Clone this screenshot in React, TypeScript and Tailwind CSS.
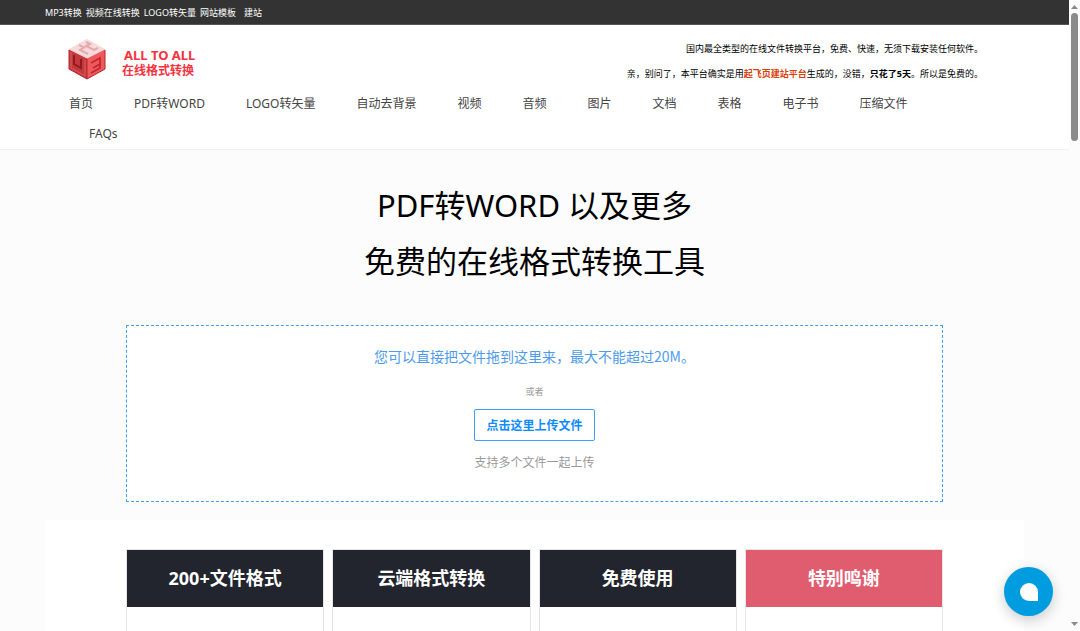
import { clsx } from 'clsx';

interface CardProps {
  title: string;
  highlight?: boolean;
}

const topLinks = ['MP3转换', '视频在线转换', 'LOGO转矢量', '网站模板'];

const navItems = [
  '首页',
  'PDF转WORD',
  'LOGO转矢量',
  '自动去背景',
  '视频',
  '音频',
  '图片',
  '文档',
  '表格',
  '电子书',
  '压缩文件',
  'FAQs',
];

const cards: CardProps[] = [
  { title: '200+文件格式' },
  { title: '云端格式转换' },
  { title: '免费使用' },
  { title: '特别鸣谢', highlight: true },
];

const CubeLogo = () => (
  <svg viewBox="0 0 38 42" className="h-[42px] w-[38px]" aria-hidden="true">
    <path d="M19 1 37 11 19 20 1 11Z" fill="#f8dada" />
    <path d="M1 11 19 20V41L1 31Z" fill="#c4383c" />
    <path d="M37 11 19 20V41L37 31Z" fill="#ee5a5c" />
    <path d="M11 7 16 9.500 12 12 20 16 M18 4 22 6 18 8 26 12 30 10" fill="none" stroke="#e5aaac" strokeWidth="2" />
    <path d="M6 17V26L13 30V21" fill="none" stroke="#8f1a1f" strokeWidth="2" />
    <path d="M3 14V30L17 38V22" fill="none" stroke="#dc5a5d" strokeWidth="1" />
    <path d="M23 25 32 20V30L23 35 M25 30 32 26" fill="none" stroke="#c4262e" strokeWidth="1.800" />
    <path d="M1 11 19 20 37 11" fill="none" stroke="#fbdcdc" strokeWidth="1" />
    <path d="M1 12V31L19 41 37 31V12 M19 21V41" fill="none" stroke="#b3262d" strokeWidth="1" />
  </svg>
);

const TopBar = () => (
  <div className="flex h-[25px] items-center gap-1 border-b border-[#555] bg-[#333] px-[45px] pt-0.5 text-[9px] text-white">
    {topLinks.map((link) => (
      <a key={link} href="#">
        {link}
      </a>
    ))}
    <a href="#" className="ml-1">
      建站
    </a>
  </div>
);

const Header = () => (
  <header className="border-b border-[#f2f2f2] bg-white pr-[84px] pl-[68px]">
    <div className="flex h-16 justify-between">
      <a href="#" className="flex items-center gap-4 pt-1 text-[12px] leading-4 font-bold text-[#f5333f]">
        <CubeLogo />
        <span className="flex flex-col pt-2">
          <span className="pl-0.5 text-[13px] leading-4">ALL TO ALL</span>
          <span>在线格式转换</span>
        </span>
      </a>
      <div className="pt-[11px] pr-0.5 text-right text-[9px] leading-[25px] text-black">
        <p>国内最全类型的在线文件转换平台，免费、快速，无须下载安装任何软件。</p>
        <p>
          亲，别问了，本平台确实是用
          <a href="#" className="font-bold text-[#d9400b]">起飞页建站平台</a>
          生成的，没错，<strong>只花了5天</strong>。所以是免费的。
        </p>
      </div>
    </div>
    <nav>
      <ul className="flex flex-wrap pl-px text-[12px] leading-[30px] text-[#444]">
        {navItems.map((item, i) => (
          <li key={item}>
            <a href="#" className={clsx('block pr-[21px]', i > 0 && 'pl-5')}>
              {item}
            </a>
          </li>
        ))}
      </ul>
    </nav>
  </header>
);

const UploadBox = () => (
  <section className="mx-auto mt-9 flex h-[177px] max-w-[817px] flex-col items-center border border-dashed border-[#3aa0fc] bg-white pt-5">
    <p className="font-['Noto_Sans_CJK_SC',sans-serif] text-[14px] leading-5 text-[#4d9bea]">
      您可以直接把文件拖到这里来，最大不能超过20M。
    </p>
    <p className="mt-4 text-[9px] leading-5 text-[#999]">或者</p>
    <button
      type="button"
      className="mt-[7px] h-8 rounded-xs border border-[#3aa0fc] px-[11px] pt-0.5 text-[12px] font-bold text-[#0d8bff]"
    >
      点击这里上传文件
    </button>
    <p className="mt-3 text-[12px] leading-5 text-[#999]">支持多个文件一起上传</p>
  </section>
);

const Card = ({ title, highlight }: CardProps) => (
  <article className="min-h-40 border border-[#e6e6e8] bg-white">
    <h2
      className={clsx(
        'flex h-[57px] items-center justify-center text-[18px] font-bold text-white',
        highlight ? 'bg-[#e05d6f]' : 'bg-[#22252e]',
      )}
    >
      {title}
    </h2>
  </article>
);

const ChatButton = () => (
  <button
    type="button"
    aria-label="在线客服"
    className="absolute right-[27px] bottom-[15px] flex size-[49px] items-center justify-center rounded-full bg-[#009ce0] shadow-[0_4px_14px_rgba(0,0,0,0.2)]"
  >
    <span className="size-[18px] rounded-full rounded-br-none bg-white" />
  </button>
);

const Scrollbar = () => (
  <div className="flex w-[11px] shrink-0 flex-col items-center bg-[#fcfcfc] pt-[5px] pb-[5px]" aria-hidden="true">
    <svg viewBox="0 0 7 4" className="h-1 w-[7px]">
      <path d="M0 4 3.5 0 7 4Z" fill="#8b8b8b" />
    </svg>
    <div className="mt-1 h-32 w-[7px] rounded-full bg-[#8b8b8b]" />
    <svg viewBox="0 0 7 4" className="mt-auto h-1 w-[7px]">
      <path d="M0 0 3.5 4 7 0Z" fill="#8b8b8b" />
    </svg>
  </div>
);

export default function App() {
  return (
    <div className="relative flex h-screen overflow-hidden bg-[#fcfcfc] font-['Noto_Sans','Noto_Sans_CJK_SC',sans-serif]">
      <div className="min-w-0 flex-1 overflow-hidden">
        <TopBar />
        <Header />
        <main className="px-[45px] pt-[27px]">
          <h1 className="text-center text-[31px] leading-14 text-black">
            PDF转WORD 以及更多
            <br />
            免费的在线格式转换工具
          </h1>
          <UploadBox />
          <section className="mt-[18px] bg-white pt-[29px] pb-10">
            <div className="mx-auto grid max-w-[817px] grid-cols-4 gap-2">
              {cards.map((card) => (
                <Card key={card.title} {...card} />
              ))}
            </div>
          </section>
        </main>
      </div>
      <Scrollbar />
      <ChatButton />
    </div>
  );
}
